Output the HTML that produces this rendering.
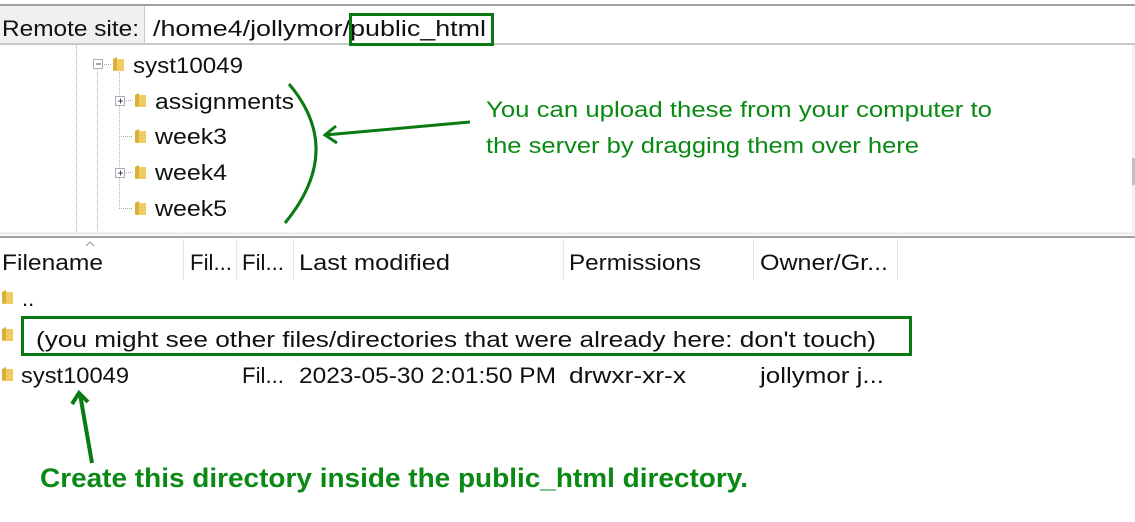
<!DOCTYPE html>
<html><head><meta charset="utf-8"><style>
html,body{margin:0;padding:0;width:1135px;height:522px;background:#fff;overflow:hidden}
svg{display:block}
text{font-family:"Liberation Sans",sans-serif}
</style></head><body>
<svg width="1135" height="522" xmlns="http://www.w3.org/2000/svg">
<defs>
<g id="fold"><path d="M0 2 L4 0 L4 2 L11 2 L11 14 L1 14 L0 13 Z" fill="#f0cc60"/><path d="M0 2 L4 0 L4 13 L1 14 L0 13Z" fill="#dcae3a"/></g>
</defs>
<!-- top bar -->
<rect x="0" y="0" width="1135" height="4" fill="#fff"/>
<rect x="0" y="4" width="1135" height="2" fill="#a0a0a0"/>
<rect x="0" y="6" width="145" height="38" fill="#f0f0f0"/>
<rect x="144" y="6" width="1" height="38" fill="#c8c8c8"/>
<rect x="0" y="43" width="1135" height="2" fill="#c8c8c8"/>
<text x="2" y="36" font-size="22" textLength="137" lengthAdjust="spacingAndGlyphs" fill="#111">Remote site:</text>
<text x="153" y="36" font-size="22" textLength="333" lengthAdjust="spacingAndGlyphs" fill="#111">/home4/jollymor/public_html</text>
<rect x="350.5" y="14.5" width="142" height="30" fill="none" stroke="#0a7a14" stroke-width="3"/>
<!-- tree -->
<line x1="76.5" y1="45" x2="76.5" y2="233" stroke="#b0b0b0" stroke-dasharray="1 1"/>
<line x1="97.5" y1="68" x2="97.5" y2="233" stroke="#b0b0b0" stroke-dasharray="1 1"/>
<line x1="102" y1="64.5" x2="112" y2="64.5" stroke="#b0b0b0" stroke-dasharray="1 1"/>
<rect x="93.5" y="59.5" width="9" height="9" fill="#fff" stroke="#aab"/>
<line x1="96" y1="64" x2="101" y2="64" stroke="#446"/>
<use href="#fold" x="113" y="57"/>
<text x="133" y="73" font-size="22" textLength="110" lengthAdjust="spacingAndGlyphs" fill="#111">syst10049</text>
<line x1="119.5" y1="72" x2="119.5" y2="208" stroke="#b0b0b0" stroke-dasharray="1 1"/>
<line x1="119" y1="136.5" x2="133" y2="136.5" stroke="#b0b0b0" stroke-dasharray="1 1"/>
<line x1="119" y1="208.5" x2="133" y2="208.5" stroke="#b0b0b0" stroke-dasharray="1 1"/>
<line x1="124" y1="100.5" x2="133" y2="100.5" stroke="#b0b0b0" stroke-dasharray="1 1"/>
<line x1="124" y1="172.5" x2="133" y2="172.5" stroke="#b0b0b0" stroke-dasharray="1 1"/>
<rect x="115.5" y="96.5" width="9" height="9" fill="#fff" stroke="#aab"/>
<path d="M118 101H123M120.5 98.5V103.5" stroke="#446"/>
<rect x="115.5" y="168.5" width="9" height="9" fill="#fff" stroke="#aab"/>
<path d="M118 173H123M120.5 170.5V175.5" stroke="#446"/>
<use href="#fold" x="135" y="93"/>
<use href="#fold" x="135" y="129"/>
<use href="#fold" x="135" y="165"/>
<use href="#fold" x="135" y="201"/>
<text x="155" y="109" font-size="22" textLength="139" lengthAdjust="spacingAndGlyphs" fill="#111">assignments</text>
<text x="155" y="144" font-size="22" textLength="72" lengthAdjust="spacingAndGlyphs" fill="#111">week3</text>
<text x="155" y="180" font-size="22" textLength="72" lengthAdjust="spacingAndGlyphs" fill="#111">week4</text>
<text x="155" y="216" font-size="22" textLength="72" lengthAdjust="spacingAndGlyphs" fill="#111">week5</text>
<!-- annotations top -->
<path d="M289 84 Q345 150 285 223" fill="none" stroke="#0a7a14" stroke-width="3"/>
<path d="M470 122 L325 135 M336 126 L325 135 L337 143" fill="none" stroke="#0a7a14" stroke-width="3"/>
<text x="486" y="117" font-size="22" textLength="506" lengthAdjust="spacingAndGlyphs" fill="#0a8a14">You can upload these from your computer to</text>
<text x="486" y="153" font-size="22" textLength="433" lengthAdjust="spacingAndGlyphs" fill="#0a8a14">the server by dragging them over here</text>
<rect x="1132" y="45" width="3" height="188" fill="#f0f0f0"/>
<rect x="1132" y="158" width="3" height="27" fill="#c0c0c0"/>
<rect x="0" y="232" width="1135" height="3" fill="#f0f0f0"/>
<rect x="0" y="236" width="1135" height="2" fill="#a0a0a0"/>
<!-- header -->
<g stroke="#e5e5e5"><line x1="183.5" y1="239" x2="183.5" y2="280"/><line x1="236.5" y1="239" x2="236.5" y2="280"/><line x1="293.5" y1="239" x2="293.5" y2="280"/><line x1="563.5" y1="239" x2="563.5" y2="280"/><line x1="753.5" y1="239" x2="753.5" y2="280"/><line x1="897.5" y1="239" x2="897.5" y2="280"/></g>
<path d="M86 246 L90 242 L94 246" fill="none" stroke="#999"/>
<g font-size="22" fill="#111">
<text x="2" y="270" textLength="101" lengthAdjust="spacingAndGlyphs">Filename</text>
<text x="190" y="270" textLength="42" lengthAdjust="spacingAndGlyphs">Fil...</text>
<text x="242" y="270" textLength="42" lengthAdjust="spacingAndGlyphs">Fil...</text>
<text x="299" y="270" textLength="151" lengthAdjust="spacingAndGlyphs">Last modified</text>
<text x="569" y="270" textLength="132" lengthAdjust="spacingAndGlyphs">Permissions</text>
<text x="760" y="270" textLength="128" lengthAdjust="spacingAndGlyphs">Owner/Gr...</text>
<text x="22" y="306">..</text>
<text x="36" y="347" textLength="840" lengthAdjust="spacingAndGlyphs">(you might see other files/directories that were already here: don't touch)</text>
<text x="21" y="383" textLength="108" lengthAdjust="spacingAndGlyphs">syst10049</text>
<text x="242" y="383" textLength="42" lengthAdjust="spacingAndGlyphs">Fil...</text>
<text x="299" y="383" textLength="257" lengthAdjust="spacingAndGlyphs">2023-05-30 2:01:50 PM</text>
<text x="569" y="383" textLength="117" lengthAdjust="spacingAndGlyphs">drwxr-xr-x</text>
<text x="760" y="383" textLength="124" lengthAdjust="spacingAndGlyphs">jollymor j...</text>
</g>
<use href="#fold" x="2" y="290"/>
<use href="#fold" x="2" y="327"/>
<use href="#fold" x="2" y="367"/>
<rect x="22.5" y="317.5" width="888" height="37" fill="none" stroke="#0a7a14" stroke-width="3"/>
<!-- bottom arrow -->
<path d="M92 463 L80 394 M72 404 L79 393 L88 402" fill="none" stroke="#0a7a14" stroke-width="4"/>
<text x="40" y="487" font-size="27" font-weight="bold" textLength="708" lengthAdjust="spacingAndGlyphs" fill="#0a8a14">Create this directory inside the public_html directory.</text>
</svg>
</body></html>
